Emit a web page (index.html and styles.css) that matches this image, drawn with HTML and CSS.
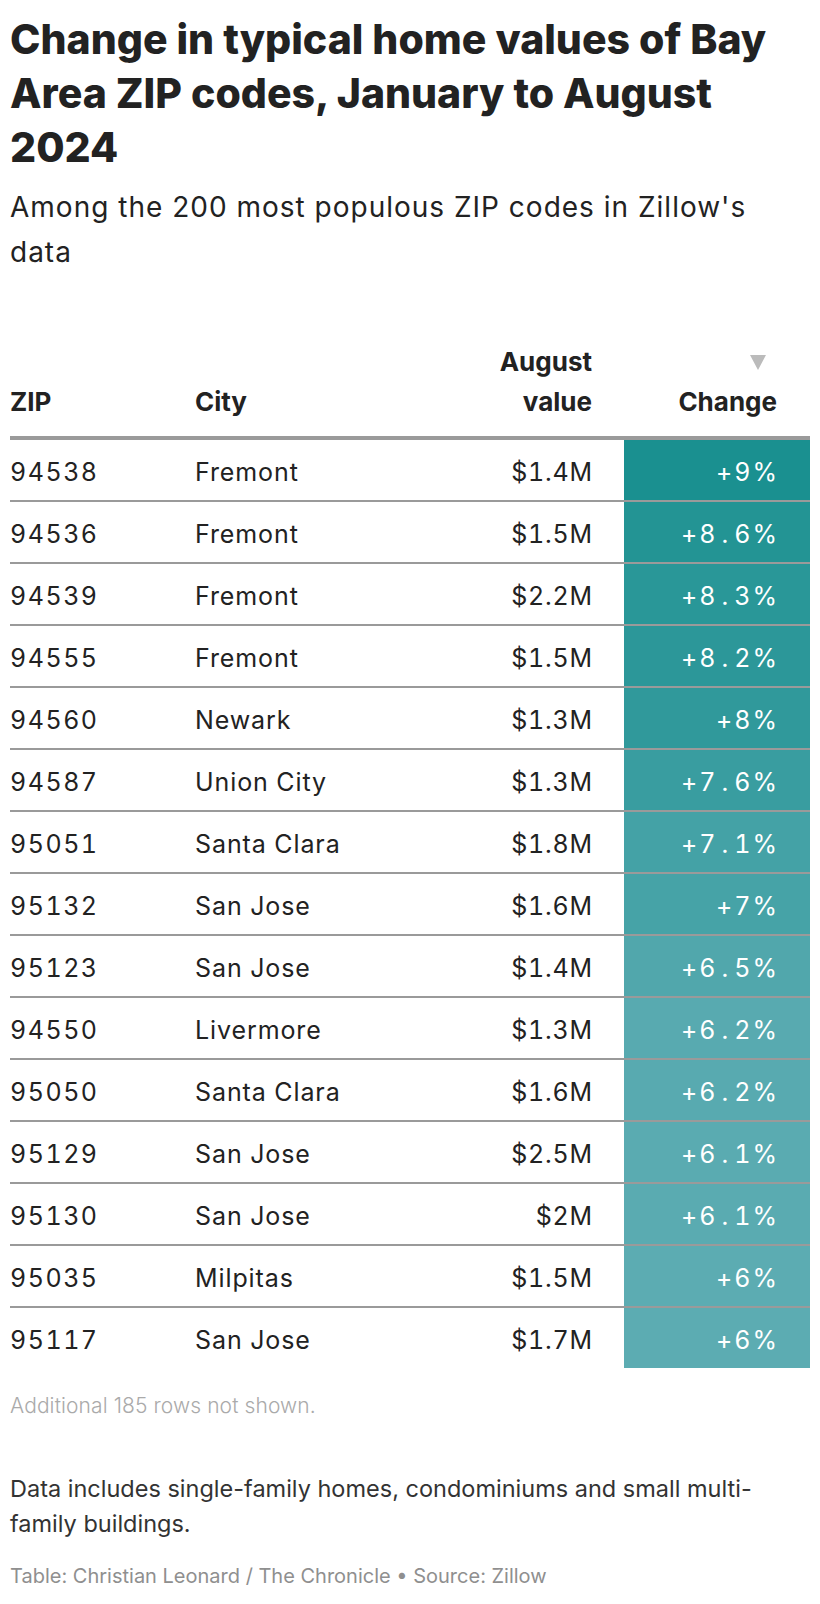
FILE: index.html
```html
<!DOCTYPE html>
<html lang="en">
<head>
<meta charset="utf-8">
<title>Change in typical home values of Bay Area ZIP codes</title>
<link rel="stylesheet" href="styles.css">
</head>
<body>
<main class="chart">
  <h1 class="title">Change in typical home values of Bay Area ZIP codes, January to August 2024</h1>
  <p class="subtitle">Among the 200 most populous ZIP codes in Zillow's data</p>

  <table class="data">
    <thead>
      <tr>
        <th class="col-zip">ZIP</th>
        <th class="col-city">City</th>
        <th class="col-value">August<br>value</th>
        <th class="col-change"><span class="sort"></span>Change</th>
      </tr>
    </thead>
    <tbody>
      <tr><td class="col-zip">94538</td><td class="col-city">Fremont</td><td class="col-value">$1.4M</td><td class="col-change" style="background:#1a9090">+9%</td></tr>
      <tr><td class="col-zip">94536</td><td class="col-city">Fremont</td><td class="col-value">$1.5M</td><td class="col-change" style="background:#239494">+8<span class="dot">.</span>6%</td></tr>
      <tr><td class="col-zip">94539</td><td class="col-city">Fremont</td><td class="col-value">$2.2M</td><td class="col-change" style="background:#299798">+8<span class="dot">.</span>3%</td></tr>
      <tr><td class="col-zip">94555</td><td class="col-city">Fremont</td><td class="col-value">$1.5M</td><td class="col-change" style="background:#2c9799">+8<span class="dot">.</span>2%</td></tr>
      <tr><td class="col-zip">94560</td><td class="col-city">Newark</td><td class="col-value">$1.3M</td><td class="col-change" style="background:#30999b">+8%</td></tr>
      <tr><td class="col-zip">94587</td><td class="col-city">Union City</td><td class="col-value">$1.3M</td><td class="col-change" style="background:#399da0">+7<span class="dot">.</span>6%</td></tr>
      <tr><td class="col-zip">95051</td><td class="col-city">Santa Clara</td><td class="col-value">$1.8M</td><td class="col-change" style="background:#44a2a6">+7<span class="dot">.</span>1%</td></tr>
      <tr><td class="col-zip">95132</td><td class="col-city">San Jose</td><td class="col-value">$1.6M</td><td class="col-change" style="background:#46a3a7">+7%</td></tr>
      <tr><td class="col-zip">95123</td><td class="col-city">San Jose</td><td class="col-value">$1.4M</td><td class="col-change" style="background:#51a7ac">+6<span class="dot">.</span>5%</td></tr>
      <tr><td class="col-zip">94550</td><td class="col-city">Livermore</td><td class="col-value">$1.3M</td><td class="col-change" style="background:#58aab0">+6<span class="dot">.</span>2%</td></tr>
      <tr><td class="col-zip">95050</td><td class="col-city">Santa Clara</td><td class="col-value">$1.6M</td><td class="col-change" style="background:#58aab0">+6<span class="dot">.</span>2%</td></tr>
      <tr><td class="col-zip">95129</td><td class="col-city">San Jose</td><td class="col-value">$2.5M</td><td class="col-change" style="background:#5aabb1">+6<span class="dot">.</span>1%</td></tr>
      <tr><td class="col-zip">95130</td><td class="col-city">San Jose</td><td class="col-value">$2M</td><td class="col-change" style="background:#5aabb1">+6<span class="dot">.</span>1%</td></tr>
      <tr><td class="col-zip">95035</td><td class="col-city">Milpitas</td><td class="col-value">$1.5M</td><td class="col-change" style="background:#5cacb2">+6%</td></tr>
      <tr><td class="col-zip">95117</td><td class="col-city">San Jose</td><td class="col-value">$1.7M</td><td class="col-change" style="background:#5cacb2">+6%</td></tr>
    </tbody>
  </table>

  <p class="more">Additional 185 rows not shown.</p>
  <p class="notes">Data includes single-family homes, condominiums and small multi-family buildings.</p>
  <p class="byline">Table: Christian Leonard / The Chronicle • Source: Zillow</p>
</main>
</body>
</html>
```

FILE: styles.css
```css
html, body {
  margin: 0;
  padding: 0;
  background: #ffffff;
}

body {
  font-family: Inter, "Open Sans", sans-serif;
  color: #222222;
}

.chart {
  padding: 12px 10px 0 10px;
}

.title {
  margin: 0;
  max-width: 775px;
  font-size: 41px;
  line-height: 54px;
  font-weight: 800;
  color: #222222;
}

.subtitle {
  margin: 11px 0 0 0;
  max-width: 775px;
  font-size: 28px;
  line-height: 45px;
  font-weight: 400;
  letter-spacing: 1px;
  color: #222222;
}

.data {
  width: 100%;
  margin-top: 67px;
  border-collapse: collapse;
  border-spacing: 0;
  font-size: 25px;
}

.data th {
  font-size: 26px;
  font-weight: 700;
  line-height: 40px;
  padding: 0 0 14px 0;
  vertical-align: bottom;
  text-align: left;
  border-bottom: 4px solid #9a9a9a;
}

.data td {
  height: 56px;
  padding: 4px 0 0 0;
  line-height: 30px;
  vertical-align: middle;
  font-variant-numeric: tabular-nums;
}

.data tbody tr {
  border-bottom: 2px solid #9a9a9a;
}

.data tbody tr:last-child {
  border-bottom: none;
}

.col-zip {
  width: 185px;
}

.data td.col-zip {
  letter-spacing: 1.5px;
}

.data td.col-city {
  letter-spacing: 0.9px;
}

.data .col-value {
  text-align: right;
  padding-right: 32px;
}

.data td.col-value {
  letter-spacing: 0.8px;
  padding-right: 31px;
}

.data .col-change {
  width: 153px;
  text-align: right;
  padding-right: 33px;
}

.data td.col-change {
  color: #ffffff;
  letter-spacing: 2px;
  padding-right: 31px;
}

.dot {
  padding: 0 4px;
}

.sort {
  display: block;
  width: 0;
  height: 0;
  margin: 0 11px 0 auto;
  border-left: 8px solid transparent;
  border-right: 8px solid transparent;
  border-top: 15px solid #bbbbbb;
  transform: translateY(-12px);
}

.more {
  margin: 23px 0 0 0;
  font-size: 21px;
  line-height: 30px;
  font-weight: 300;
  letter-spacing: 0.1px;
  color: #aaaaaa;
}

.notes {
  margin: 50px 0 0 0;
  max-width: 780px;
  font-size: 23.5px;
  line-height: 35px;
  color: #333333;
}

.byline {
  margin: 21px 0 0 0;
  font-size: 20px;
  line-height: 28px;
  color: #8f8f8f;
}
```
